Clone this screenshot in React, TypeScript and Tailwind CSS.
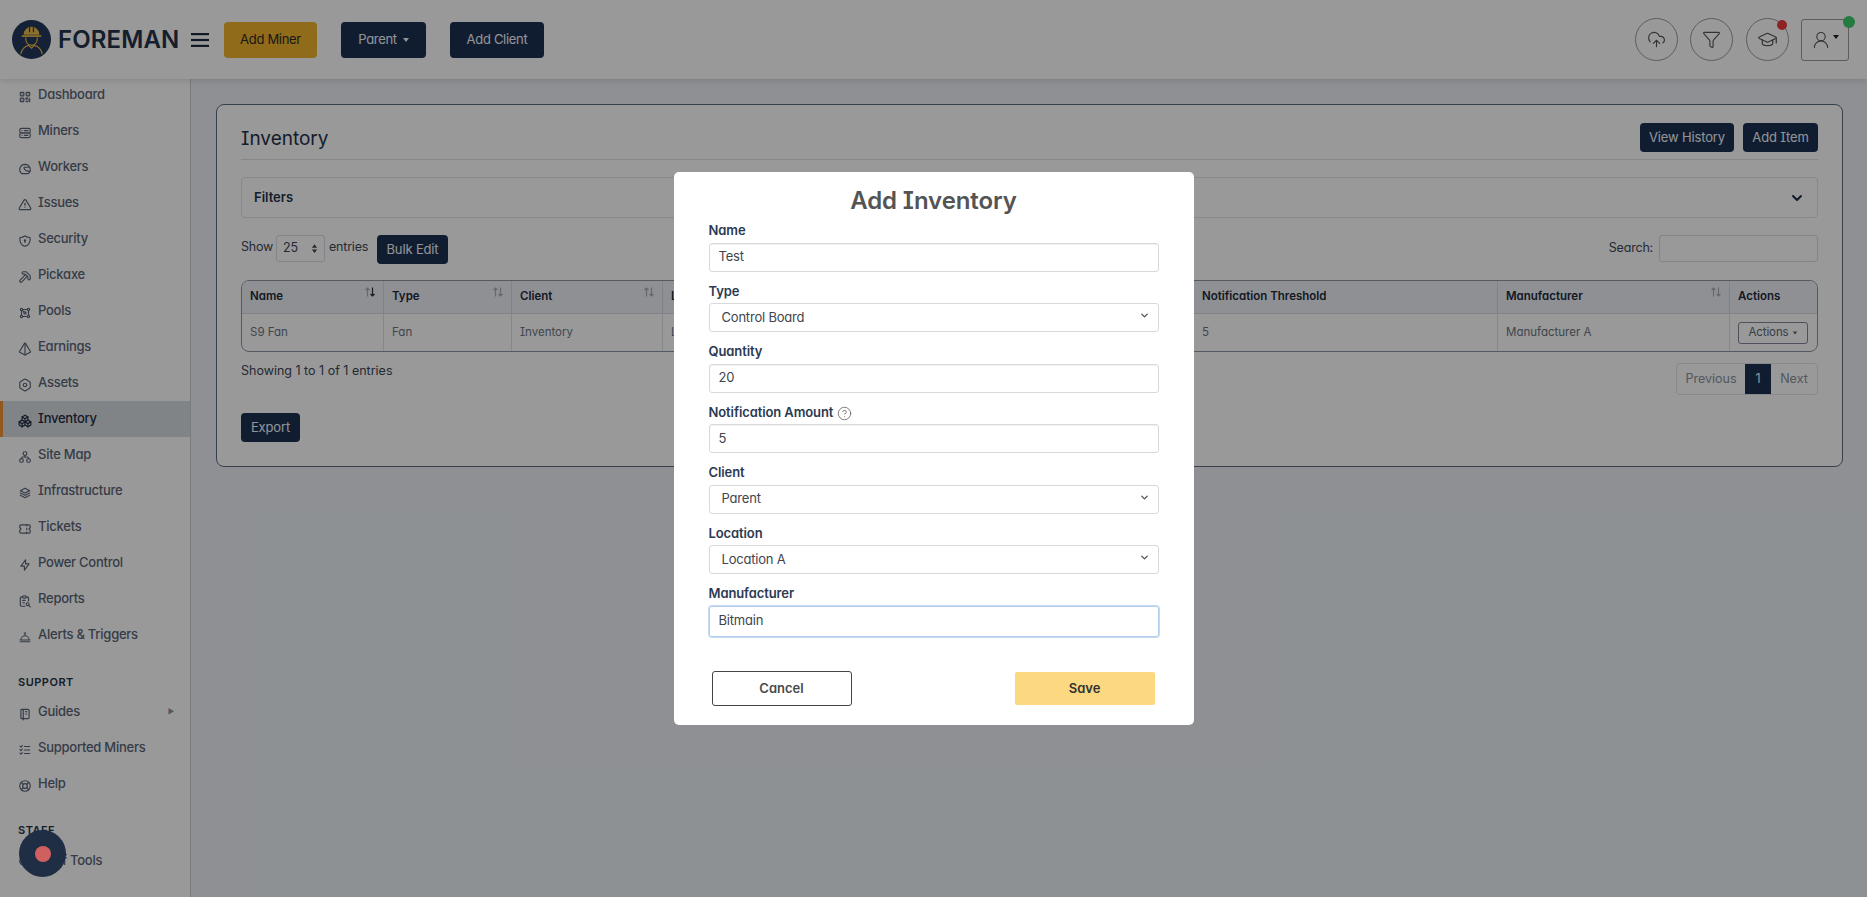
import type { ReactNode } from 'react';
import { ChevronDown, CloudUpload, Funnel, GraduationCap, UserRound, CircleHelp } from 'lucide-react';
import {
  TbQrcode, TbServer2, TbHelmet, TbAlertTriangle, TbShieldLock, TbPick, TbTopologyComplex, TbPyramid,
  TbSettings2, TbPackages, TbSitemap, TbStack2, TbTicket, TbBolt, TbReportSearch,
  TbNotebook, TbListCheck, TbLifebuoy, TbTool,
} from 'react-icons/tb';

// concierge bell, not in the icon sets
function DeskBell() {
  return (
    <svg viewBox="0 0 24 24" className="h-[1em] w-[1em]" fill="none" stroke="currentColor" strokeWidth="1.8">
      <path d="M5 17a7 7 0 0 1 14 0M3 20h18M3 17h18M12 10V6M10 5h4" />
    </svg>
  );
}

const NAV = [
  ['Dashboard', TbQrcode], ['Miners', TbServer2], ['Workers', TbHelmet], ['Issues', TbAlertTriangle],
  ['Security', TbShieldLock], ['Pickaxe', TbPick], ['Pools', TbTopologyComplex], ['Earnings', TbPyramid],
  ['Assets', TbSettings2], ['Inventory', TbPackages], ['Site Map', TbSitemap], ['Infrastructure', TbStack2],
  ['Tickets', TbTicket], ['Power Control', TbBolt], ['Reports', TbReportSearch], ['Alerts & Triggers', DeskBell],
] as const;

const navyBtn = 'flex items-center justify-center rounded bg-[#1b3153] text-[#f3f6fb]';
const caret = 'inline-block h-0 w-0 border-x-[3.5px] border-t-[4px] border-x-transparent border-t-current';

function Logo() {
  return (
    <svg viewBox="0 0 40 40" className="h-[39px] w-[39px] shrink-0">
      <circle cx="20" cy="20" r="20" fill="#22375a" />
      <path d="M12 15a8 8 0 0 1 16 0z" fill="#e9b949" />
      <path d="M18 7.5v5M22 7.5v5" stroke="#22375a" strokeWidth="1.2" />
      <path d="M10 16.5h20" stroke="#e9b949" strokeWidth="1.8" />
      <path d="M14 18c0 5 2.5 8 6 8s6-3 6-8" fill="none" stroke="#e9b949" strokeWidth="1.2" />
      <path d="M9 35c1-5 4-8 8-9l3 3 3-3c4 1 7 4 8 9" fill="none" stroke="#e9b949" strokeWidth="1.2" />
    </svg>
  );
}

function NavRow({ icon, label, active, arrow }: { icon: ReactNode; label: string; active?: boolean; arrow?: boolean }) {
  return (
    <div className={`relative flex h-9 items-center pl-[18px] text-[13px] font-medium tracking-[-0.25px] ${active ? 'bg-[#d8dce2] text-[#1f2d45]' : 'text-[#5a6577]'}`}>
      {active && <span className="absolute inset-y-0 left-0 w-[3px] bg-[#f59332]" />}
      <span className="mr-[6px] mt-[3px] flex w-[14px] justify-center text-[16px]">{icon}</span>
      {label}
      {arrow && <span className="ml-auto mr-[16px] text-[7px] text-[#8a93a1]">▶</span>}
    </div>
  );
}

function SortArrows({ dark }: { dark?: boolean }) {
  return (
    <svg viewBox="0 0 12 12" className="absolute right-[7px] top-[5px] h-[12px] w-[12px]" fill="none" strokeWidth="1.2">
      <path d="M3.5 10.5V2M1.5 4l2-2 2 2" stroke="#a7adb7" />
      <path d="M8.5 1.5V10M6.5 8l2 2 2-2" stroke={dark ? '#222b3a' : '#a7adb7'} />
    </svg>
  );
}

function Field({ label, children }: { label: ReactNode; children: ReactNode }) {
  return (
    <div className="h-[60.5px]">
      <div className="flex h-[18px] items-center text-[13px] font-semibold tracking-[-0.1px] text-[#2b3a52]">{label}</div>
      <div className="mt-[2.5px]">{children}</div>
    </div>
  );
}

const TextBox = ({ value }: { value: string }) => (
  <div className="flex h-[29px] items-center rounded-[3px] border border-[#d9d9d9] pl-[9px] text-[13px] tracking-[-0.2px] text-[#40454d] shadow-[inset_0_1px_1px_rgba(0,0,0,0.06)]">{value}</div>
);

const SelectBox = ({ value }: { value: string }) => (
  <div className="flex h-[29px] items-center justify-between rounded-[3px] border border-[#d9d9d9] pl-[12px] pr-[8px] text-[13px] tracking-[-0.2px] text-[#40454d]">
    {value}
    <ChevronDown size={11} strokeWidth={3} className="-mt-[4px] text-[#555]" />
  </div>
);

const COLS = ['Name', 'Type', 'Client', 'Location', 'Quantity', 'Notification Threshold', 'Manufacturer', 'Actions'];
const CELLS = ['S9 Fan', 'Fan', 'Inventory', 'Location A', '20', '5', 'Manufacturer A'];

export default function App() {
  return (
    <div className="relative h-[897px] overflow-hidden bg-[#edf1f6] font-['Inter','Liberation_Sans',sans-serif] [font-feature-settings:'cv11','cv08']">
      {/* Header */}
      <header className="relative z-10 flex h-[79px] items-center bg-white pl-[12px] pr-[18px] shadow-[0_2px_6px_rgba(0,0,0,0.12)]">
        <Logo />
        <span className="ml-[7px] w-[120px] text-[24px] font-semibold tracking-[0.1px] text-[#24324a]">FOREMAN</span>
        <svg viewBox="0 0 18 14" className="ml-[13px] h-[14px] w-[18px] text-[#1d2a3f]" fill="currentColor">
          <rect width="18" height="2.2" />
          <rect y="5.9" width="18" height="2.2" />
          <rect y="11.8" width="18" height="2.2" />
        </svg>
        <button className="ml-[15px] h-[36px] w-[93px] rounded bg-[#efb22c] text-[13px] tracking-[-0.3px] text-[#2a2a2a]">Add Miner</button>
        <button className={`${navyBtn} ml-[24px] h-[36px] w-[85px] gap-[6px] text-[13px] tracking-[-0.3px]`}>Parent <span className={caret} /></button>
        <button className={`${navyBtn} ml-[24px] h-[36px] w-[94px] text-[13px] tracking-[-0.3px]`}>Add Client</button>
        <div className="ml-auto flex items-center">
          <div className="flex h-[43px] w-[43px] items-center justify-center rounded-full border border-[#9b9b9b] text-[#555]"><CloudUpload size={19} strokeWidth={1.4} /></div>
          <div className="ml-[12px] flex h-[43px] w-[43px] items-center justify-center rounded-full border border-[#9b9b9b] text-[#555]"><Funnel size={19} strokeWidth={1.4} /></div>
          <div className="relative ml-[13px] flex h-[43px] w-[43px] items-center justify-center rounded-full border border-[#9b9b9b] text-[#555]">
            <GraduationCap size={21} strokeWidth={1.4} />
            <span className="absolute right-[1px] top-[1px] h-[10px] w-[10px] rounded-full bg-[#ee3a3f]" />
          </div>
          <div className="relative ml-[12px] flex h-[42px] w-[48px] items-center justify-center gap-[2px] rounded-[3px] border border-[#9b9b9b] text-[#555]">
            <UserRound size={20} strokeWidth={1.3} />
            <span className={`${caret} -mt-[5px] text-[#222]`} />
            <span className="absolute right-[-7px] top-[-4px] h-[12px] w-[12px] rounded-full bg-[#3ecb6c]" />
          </div>
        </div>
      </header>

      <div className="flex h-[818px]">
        {/* Sidebar */}
        <aside className="w-[191px] shrink-0 overflow-hidden border-r border-[#c9ced6] bg-white">
          <div className="-mt-[2px]">
            {NAV.map(([label, Icon]) => (
              <NavRow key={label} label={label} icon={<Icon />} active={label === 'Inventory'} />
            ))}
          </div>
          <div className="mb-[4px] mt-[21px] h-[16px] pl-[18px] text-[11px] font-semibold leading-[16px] tracking-[0.5px] text-[#24324a]">SUPPORT</div>
          <NavRow label="Guides" icon={<TbNotebook />} arrow />
          <NavRow label="Supported Miners" icon={<TbListCheck />} />
          <NavRow label="Help" icon={<TbLifebuoy />} />
          <div className="mb-[5px] mt-[20px] h-[16px] pl-[18px] text-[11px] font-semibold leading-[16px] tracking-[0.5px] text-[#24324a]">STAFF</div>
          <NavRow label="Staff Tools" icon={<TbTool />} />
        </aside>

        {/* Main */}
        <main className="flex-1 px-[25px] pt-[25px]">
          <section className="h-[363px] rounded-lg border border-[#5e6b80] bg-white px-[24px] pt-[18px]">
            <div className="flex h-[37px] items-start justify-between border-b border-[#dee2e6]">
              <h1 className="mt-[3px] text-[19px] font-normal leading-[26px] text-[#24324a]">Inventory</h1>
              <div className="flex gap-[9px]">
                <button className={`${navyBtn} h-[29px] w-[94px] text-[13px] tracking-[-0.15px]`}>View History</button>
                <button className={`${navyBtn} h-[29px] w-[75px] text-[13px] tracking-[-0.15px]`}>Add Item</button>
              </div>
            </div>

            <div className="mt-[17px] flex h-[41px] items-center justify-between rounded border border-[#dfe3e8] px-[12px] text-[13px] font-semibold text-[#24324a]">
              Filters
              <ChevronDown size={16} strokeWidth={3} className="text-[#1f2d45]" />
            </div>

            <div className="mt-[17px] flex h-[29px] items-start justify-between text-[12.5px] tracking-[-0.2px] text-[#3c4858]">
              <div className="flex items-start">
                <span className="mt-[3px] w-[31px]">Show</span>
                <div className="ml-[4px] flex h-[27px] w-[49px] items-center justify-between rounded-[3px] border border-[#d9dde3] px-[6px] text-[12.5px]">
                  25
                  <svg viewBox="0 0 8 12" className="h-[11px] w-[7px]" fill="currentColor">
                    <path d="M4 1l3 4H1zM4 11L1 7h6z" />
                  </svg>
                </div>
                <span className="ml-[4px] mt-[3px] w-[39px]">entries</span>
                <button className={`${navyBtn} ml-[9px] h-[29px] w-[71px] text-[13px] tracking-[-0.15px]`}>Bulk Edit</button>
              </div>
              <div className="flex items-center">
                <span>Search:</span>
                <div className="ml-[6px] h-[27px] w-[159px] rounded-[3px] border border-[#d9dde3]" />
              </div>
            </div>

            <div className="mt-[16px] grid h-[72px] grid-cols-[142px_128px_151px_268px_263px_304px_232px_87px] grid-rows-[33px_1fr] overflow-hidden rounded-lg border border-[#8d96a3]">
              {COLS.map((c, i) => (
                <div key={c} className={`relative flex items-center bg-[#eef1f5] pl-[8px] text-[11.5px] font-semibold text-[#1e2a3c] ${i < 7 ? 'border-r border-[#d5d9df]' : ''} border-b border-[#d5d9df]`}>
                  {c}
                  {i !== 5 && i !== 7 && <SortArrows dark={i === 0} />}
                </div>
              ))}
              {CELLS.map((c) => (
                <div key={c} className="flex items-center border-r border-[#dfe2e7] pl-[8px] text-[11.5px] text-[#6b7482]">{c}</div>
              ))}
              <div className="flex items-center pl-[8px]">
                <div className="flex h-[22px] w-[70px] items-center justify-center gap-[3px] rounded-[3px] border border-[#7f8896] text-[11.5px] tracking-[-0.1px] text-[#5d6775]">Actions <span className={`${caret} scale-75`} /></div>
              </div>
            </div>

            <div className="mt-[11px] flex items-start justify-between">
              <span className="mt-[-1px] text-[12.5px] text-[#3c4858]">Showing 1 to 1 of 1 entries</span>
              <div className="flex h-[32px] overflow-hidden rounded border border-[#dfe3e8] text-[12.5px] text-[#8a929e]">
                <span className="flex w-[68px] items-center justify-center">Previous</span>
                <span className="flex w-[26px] items-center justify-center bg-[#1b3153] text-[#f3f6fb]">1</span>
                <span className="flex w-[46px] items-center justify-center">Next</span>
              </div>
            </div>

            <button className={`${navyBtn} mt-[18px] h-[29px] w-[59px] text-[13px] tracking-[-0.15px]`}>Export</button>
          </section>
        </main>
      </div>

      {/* Modal backdrop */}
      <div className="absolute inset-0 z-20 flex items-center justify-center bg-black/40">
        <div className="w-[520px] rounded-[5px] bg-white px-[35px] pb-[19px] pt-[14px]">
          <h2 className="mb-[6px] h-[30px] text-center text-[24px] font-semibold leading-[30px] tracking-[-0.1px] text-[#545454]">Add Inventory</h2>
          <Field label="Name"><TextBox value="Test" /></Field>
          <Field label="Type"><SelectBox value="Control Board" /></Field>
          <Field label="Quantity"><TextBox value="20" /></Field>
          <Field label={<>Notification Amount <CircleHelp size={15} strokeWidth={1.2} className="ml-[4px] mt-[1px] text-[#555]" /></>}><TextBox value="5" /></Field>
          <Field label="Client"><SelectBox value="Parent" /></Field>
          <Field label="Location"><SelectBox value="Location A" /></Field>
          <Field label="Manufacturer">
            <div className="flex h-[31px] items-center rounded-[3px] border border-[#b4cfe9] pl-[9px] text-[13px] tracking-[-0.2px] text-[#40454d] shadow-[0_0_0_1px_#c4daf0]">Bitmain</div>
          </Field>
          <div className="ml-[3px] mr-[4px] mt-[25.5px] flex items-center justify-between">
            <button className="h-[35px] w-[140px] rounded-[3px] border border-[#444] text-[13px] font-semibold text-[#4a4a4a]">Cancel</button>
            <button className="h-[33px] w-[140px] rounded-[2px] bg-[#fcd980] text-[13px] font-semibold text-[#333]">Save</button>
          </div>
        </div>
      </div>

      {/* Recorder widget */}
      <div className="absolute bottom-[20px] left-[19px] z-30 flex h-[47px] w-[47px] items-center justify-center rounded-full bg-[#1f2d45]">
        <span className="h-[16px] w-[16px] rounded-full bg-[#d0605f]" />
      </div>
    </div>
  );
}
